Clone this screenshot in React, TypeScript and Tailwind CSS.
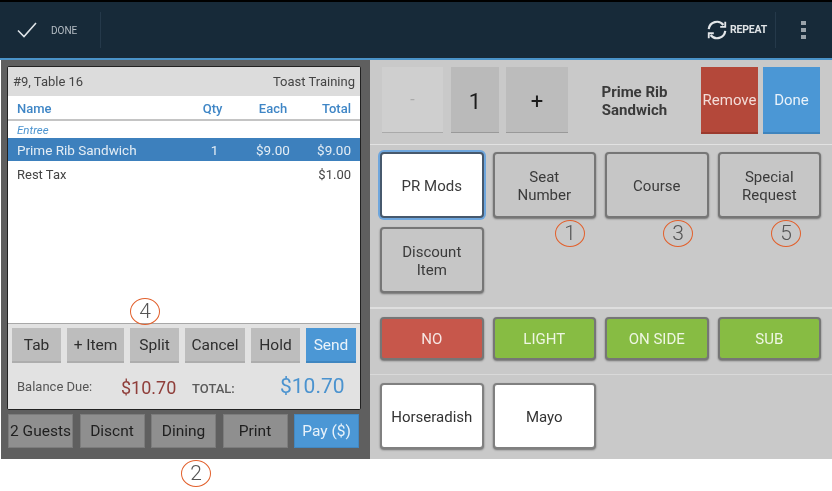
import React from "react";

const font = { fontFamily: "Roboto, 'Liberation Sans', sans-serif" };

function Circle({ n, className }: { n: string; className: string }) {
  return (
    <div className={`absolute w-[30px] h-[27px] rounded-[50%] border-[1.5px] border-[#e2602c] flex items-center justify-center text-[21px] font-light leading-none text-[#555] bg-transparent ${className}`}>
      {n}
    </div>
  );
}

function OrderBtn({ label, w, blue }: { label: string; w: string; blue?: boolean }) {
  return (
    <div className={`${w} h-[35px] pt-[2px] flex items-center justify-center text-[15.5px] border-b-2 ${blue ? "bg-[#4b97d5] border-[#3f86c0] text-[#eaf3fa]" : "bg-[#bdbdbd] border-[#adadad] text-[#2e2e2e]"}`}>
      {label}
    </div>
  );
}

function FootBtn({ label, blue }: { label: string; blue?: boolean }) {
  return (
    <div className={`w-[65px] h-[34px] pt-[1px] flex items-center justify-center text-[15.5px] whitespace-nowrap border ${blue ? "bg-[#4b97d5] border-[#4288c2] text-[#e8f2fa]" : "bg-[#8f8f8f] border-[#7c7c7c] text-[#1f1f1f]"}`}>
      {label}
    </div>
  );
}

function Mod({ label, tone = "gray", h = "h-[66px]" }: { label: React.ReactNode; tone?: "gray" | "white" | "sel" | "red" | "green"; h?: string }) {
  const tones = {
    gray: "bg-[#c6c6c6] text-[#3b3b3b] border-[#767676]",
    white: "bg-white text-[#333] border-[#808080]",
    sel: "bg-white text-[#3b3b3b] border-[#47596d] shadow-[0_0_0_2px_#6ea6dd]",
    red: "bg-[#c7574b] text-[#f6e6e3] border-[#767676]",
    green: "bg-[#87bc43] text-[#eef6e2] border-[#767676]",
  };
  return (
    <div className={`${h} pt-[1px] rounded-[4px] border-2 ${tones[tone]} ${tone === "sel" ? "" : "shadow-[0_1px_2px_rgba(0,0,0,0.45)]"} flex items-center justify-center text-center text-[15px] leading-[18px]`}>
      {label}
    </div>
  );
}

export default function App() {
  return (
    <div style={font} className="relative w-[832px] h-[491px] bg-white overflow-hidden blur-[0.35px]">
      <div className="h-[2px] bg-black" />
      <div className="h-[56px] bg-[#172a39] flex items-stretch justify-between">
        <div className="flex items-center">
          <div className="flex items-center h-[36px] w-[101px] border-r border-[#25394a] pl-[17px]">
            <svg width="20" height="16" viewBox="0 0 20 16" fill="none" stroke="#dfe4e8" strokeWidth="1.6">
              <path d="M1 8.5 L7 14.5 L19 1" />
            </svg>
            <span className="ml-[14px] text-[10px] text-[#b5bdc4]">DONE</span>
          </div>
        </div>
        <div className="flex items-center">
          <svg width="22" height="22" viewBox="0 0 24 24" fill="none" stroke="#e3e6e9" strokeWidth="2.4">
            <path d="M3 11 A9 9 0 0 1 19 6.5" />
            <path d="M21 3 V8.5 H15.5" strokeWidth="2" />
            <path d="M21 13 A9 9 0 0 1 5 17.5" />
            <path d="M3 21 V15.5 H8.5" strokeWidth="2" />
          </svg>
          <span className="ml-[2px] text-[10.5px] font-bold tracking-[-0.2px] text-[#dfe3e6] w-[38px]">REPEAT</span>
          <div className="w-px h-[36px] bg-[#25394a] ml-[7px]" />
          <div className="w-[56px] pr-[1px] flex flex-col items-center gap-[3px]">
            <span className="w-[5px] h-[4px] bg-[#9aa3aa]" />
            <span className="w-[5px] h-[4px] bg-[#9aa3aa]" />
            <span className="w-[5px] h-[4px] bg-[#9aa3aa]" />
          </div>
        </div>
      </div>
      <div className="h-[2px] bg-[#4a93c9]" />

      <div className="flex h-[399px]">
        <div className="w-[369px] ml-px bg-[#5f5f5f] pt-[6px] pl-[6px] pr-[8px] flex flex-col">
          <div className="h-[344px] w-[354px] bg-white rounded-[2px] border border-[#222] flex flex-col overflow-hidden">
            <div className="h-[29px] bg-[#dcdcdc] flex items-center justify-between pl-[5px] pr-[5px] text-[13px] text-[#444]">
              <span>#9, Table 16</span>
              <span>Toast Training</span>
            </div>
            <div className="h-[25px] pt-[2px] flex items-center border-b-2 border-[#c4c4c4] text-[13px] font-medium text-[#3f86c6] pl-[9px] pr-[9px]">
              <span className="flex-1">Name</span>
              <span className="w-[25px] text-center mr-[33px]">Qty</span>
              <span className="w-[30px] text-center mr-[33px]">Each</span>
              <span className="w-[30px] text-right">Total</span>
            </div>
            <div className="h-[17px] pt-[3px] flex items-center pl-[9px] text-[11.5px] italic text-[#4a93cf]">Entree</div>
            <div className="h-[23px] pt-[1px] bg-[#3d80bd] flex items-center text-[13.5px] text-[#e4edf5] pl-[9px] pr-[9px]">
              <span className="flex-1">Prime Rib Sandwich</span>
              <span className="w-[25px] text-center mr-[29px]">1</span>
              <span className="w-[34px] text-center mr-[27px]">$9.00</span>
              <span className="w-[34px] text-right">$9.00</span>
            </div>
            <div className="h-[27px] pt-[1px] flex items-center justify-between text-[13px] text-[#444] pl-[9px] pr-[9px]">
              <span>Rest Tax</span>
              <span>$1.00</span>
            </div>
            <div className="flex-1" />
            <div className="h-[86px] bg-[#e2e2e2] border-t border-[#a8a8a8] flex flex-col">
              <div className="flex gap-[6px] pl-[4px] pt-[4px]">
                <OrderBtn label="Tab" w="w-[49px]" />
                <OrderBtn label="+ Item" w="w-[57px]" />
                <OrderBtn label="Split" w="w-[49px]" />
                <OrderBtn label="Cancel" w="w-[60px]" />
                <OrderBtn label="Hold" w="w-[49px]" />
                <OrderBtn label="Send" w="w-[50px]" blue />
              </div>
              <div className="flex-1 pt-[2px] flex items-center pl-[9px]">
                <span className="text-[13px] text-[#555] w-[104px]">Balance Due:</span>
                <span className="text-[18px] text-[#8f3e3a] w-[71px]">$10.70</span>
                <span className="text-[13px] font-medium text-[#5a5a5a] mt-[3px] w-[88px]">TOTAL:</span>
                <span className="text-[21px] text-[#4b93cf]">$10.70</span>
              </div>
            </div>
          </div>
          <div className="flex gap-[6.5px] mt-[4px] pl-[1px]">
            <FootBtn label="2 Guests" />
            <FootBtn label="Discnt" />
            <FootBtn label="Dining" />
            <FootBtn label="Print" />
            <FootBtn label="Pay ($)" blue />
          </div>
        </div>

        <div className="flex-1 bg-[#c9c9c9] flex flex-col">
          <div className="h-[85px] border-b border-[#e2e2e2] pt-[7px] pl-[12px] pr-[11px] flex">
            <div className="w-[61px] h-[66px] bg-[#cfcfcf] border-b border-[#aaa] flex items-center justify-center text-[#aaa] text-[16px]">-</div>
            <div className="w-[48px] h-[66px] pt-[4px] ml-[8px] bg-[#bababa] border-b border-[#999] flex items-center justify-center text-[22px] text-[#1c1c1c]">1</div>
            <div className="w-[62px] h-[66px] pt-[4px] ml-[7px] bg-[#bcbcbc] border-b border-[#999] flex items-center justify-center text-[22px] text-[#1c1c1c]">+</div>
            <div className="w-[133px] h-[66px] pt-[2px] flex items-center justify-center text-center text-[15px] leading-[18px] font-bold text-[#3a3a3a]">Prime Rib<br />Sandwich</div>
            <div className="w-[57px] h-[67px] pt-[1px] bg-[#b4483a] border-b-2 border-[#9b3a2e] flex items-center justify-center text-[15px] text-[#f3dcd8]">Remove</div>
            <div className="w-[57px] h-[67px] pt-[1px] ml-[5px] bg-[#4b97d5] border-b-2 border-[#3f84bd] flex items-center justify-center text-[15px] text-[#e8f2fa]">Done</div>
          </div>
          <div className="h-[164px] border-b-2 border-[#dedede] pt-[7px] pl-[10px] pr-[11px]">
            <div className="grid grid-cols-4 gap-x-[9px] gap-y-[9px]">
              <Mod label="PR Mods" tone="sel" />
              <Mod label={<>Seat<br />Number</>} />
              <Mod label="Course" />
              <Mod label={<>Special<br />Request</>} />
              <Mod label={<>Discount<br />Item</>} />
            </div>
          </div>
          <div className="h-[66px] border-b border-[#d9d9d9] pt-[8px] pl-[10px] pr-[11px]">
            <div className="grid grid-cols-4 gap-x-[9px]">
              <Mod label="NO" tone="red" h="h-[43px]" />
              <Mod label="LIGHT" tone="green" h="h-[43px]" />
              <Mod label="ON SIDE" tone="green" h="h-[43px]" />
              <Mod label="SUB" tone="green" h="h-[43px]" />
            </div>
          </div>
          <div className="pt-[8px] pl-[10px] pr-[11px]">
            <div className="grid grid-cols-4 gap-x-[9px]">
              <Mod label="Horseradish" tone="white" />
              <Mod label="Mayo" tone="white" />
            </div>
          </div>
        </div>
      </div>

      <Circle n="4" className="left-[130px] top-[298px]" />
      <Circle n="2" className="left-[181px] top-[460px]" />
      <Circle n="1" className="left-[555px] top-[220px]" />
      <Circle n="3" className="left-[663px] top-[220px]" />
      <Circle n="5" className="left-[771px] top-[220px]" />
    </div>
  );
}
